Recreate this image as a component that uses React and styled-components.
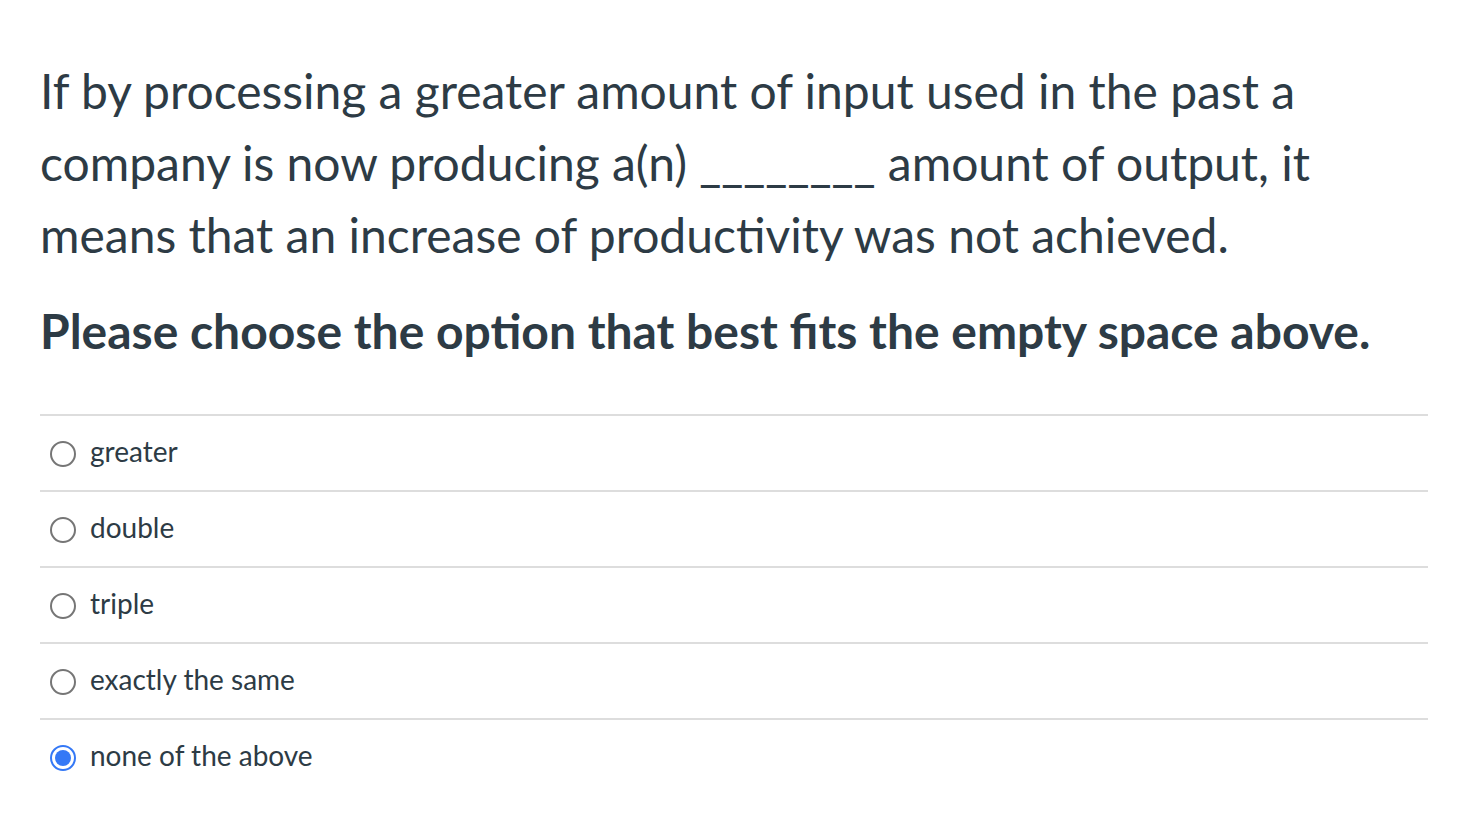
import React, { useState } from 'react'
import styled, { createGlobalStyle } from 'styled-components'

const GlobalStyle = createGlobalStyle`
  html, body {
    margin: 0;
    padding: 0;
    background: #fff;
  }
  body {
    font-family: Lato, "Liberation Sans", sans-serif;
    color: #2d3b45;
  }
`

const Page = styled.div`
  padding: 55px 40px 0;
`

const Question = styled.p`
  margin: 0;
  font-size: 48px;
  line-height: 72px;
`

const Prompt = styled.p`
  margin: 24px 0 0;
  font-size: 48px;
  line-height: 72px;
  font-weight: 700;
`

const Answers = styled.div`
  margin-top: 47px;
  display: flex;
  flex-direction: column;
`

const Row = styled.label`
  display: flex;
  align-items: center;
  gap: 14px;
  height: 74px;
  padding-left: 10px;
  border-top: 2px solid #dddddd;
  font-size: 28px;
  cursor: pointer;
`

const Label = styled.span`
  margin-top: -4px;
`

const Radio = styled.span`
  box-sizing: border-box;
  width: 26px;
  height: 26px;
  margin-top: 2px;
  border-radius: 50%;
  border: 2px solid ${p => (p.checked ? '#3478f6' : '#767676')};
  display: flex;
  align-items: center;
  justify-content: center;
  flex-shrink: 0;

  &::after {
    content: '';
    width: 16px;
    height: 16px;
    border-radius: 50%;
    background: #3478f6;
    display: ${p => (p.checked ? 'block' : 'none')};
  }
`

const options = ['greater', 'double', 'triple', 'exactly the same', 'none of the above']

export default function App() {
  const [selected, setSelected] = useState(4)

  return (
    <Page>
      <GlobalStyle />
      <Question>
        If by processing a greater amount of input used in the past a company is now
        producing a(n) ________ amount of output, it means that an increase of
        productivity was not achieved.
      </Question>
      <Prompt>Please choose the option that best fits the empty space above.</Prompt>
      <Answers>
        {options.map((opt, i) => (
          <Row key={opt} onClick={() => setSelected(i)}>
            <Radio checked={selected === i} />
            <Label>{opt}</Label>
          </Row>
        ))}
      </Answers>
    </Page>
  )
}
